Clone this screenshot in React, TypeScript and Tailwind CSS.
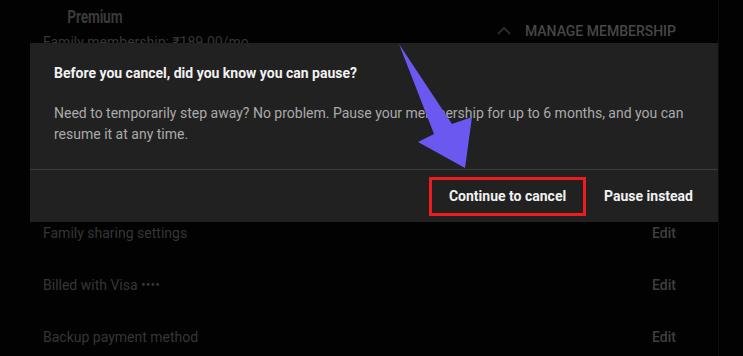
import React from "react";

export default function App() {
  return (
    <div
      className="relative w-[743px] h-[356px] overflow-hidden bg-[#020202]"
      style={{ fontFamily: "Roboto, 'Liberation Sans', sans-serif" }}
    >
      {/* background page */}
      <div className="h-full w-[719px] border-r border-[#0c0c0c] pl-[43px] pr-[42px] pt-[7px]">
        <div className="flex justify-between">
          <div>
            <div className="h-[20px] pl-[32px] text-[18px] leading-[20px] font-bold text-[#3a3a3a] origin-left scale-x-[0.76] tracking-[-0.2px]">
              Premium
            </div>
            <div className="mt-[5px] h-[20px] text-[14px] leading-[20px] text-[#363636]">
              Family membership: ₹189.00/mo
            </div>
          </div>
          <div className="mt-[14px] flex h-[20px] items-center gap-[14px] text-[14px] font-medium leading-[20px] text-[#474747]">
            <svg width="14" height="10" viewBox="0 0 14 10" fill="none">
              <path d="M1 8 L7 2 L13 8" stroke="#3a3a3a" strokeWidth="1.3" />
            </svg>
            <span className="uppercase">Manage membership</span>
          </div>
        </div>
        <div className="mt-[155px]">
          {[
            "Family sharing settings",
            "Billed with Visa ••••",
            "Backup payment method",
          ].map((t) => (
            <div key={t} className="flex h-[52px] items-center justify-between text-[14px] text-[#363636]">
              <span>{t}</span>
              <span className="font-medium text-[#404040]">Edit</span>
            </div>
          ))}
        </div>
      </div>

      {/* dialog overlay */}
      <div className="absolute left-[30px] top-[43px] w-[688px] h-[179px] bg-[#212121] flex flex-col">
        <div className="px-[24px] pt-[20px] pb-[24px] border-b border-[#3d3d3d]">
          <div className="text-[14px] font-bold leading-[20px] text-[#f1f1f1]">
            Before you cancel, did you know you can pause?
          </div>
          <div className="mt-[20px] text-[14px] leading-[21px] text-[#aaaaaa]">
            Need to temporarily step away? No problem. Pause your membership for up to 6 months, and you can resume it at any time.
          </div>
        </div>
        <div className="flex flex-1 items-center justify-end pr-[25px] gap-[18px]">
          <div className="flex h-[39px] w-[157px] items-center justify-center border-[3px] border-[#ec1c1f] text-[14px] font-bold text-[#f1f1f1]">
            Continue to cancel
          </div>
          <div className="text-[14px] font-bold text-[#f1f1f1]">Pause instead</div>
        </div>
      </div>

      {/* arrow annotation */}
      <svg className="absolute left-0 top-0" width="743" height="356" viewBox="0 0 743 356">
        <polygon
          points="399,44 452,124 472,117 465,168 418,142 434,134"
          fill="#6a58f0"
        />
      </svg>
    </div>
  );
}
